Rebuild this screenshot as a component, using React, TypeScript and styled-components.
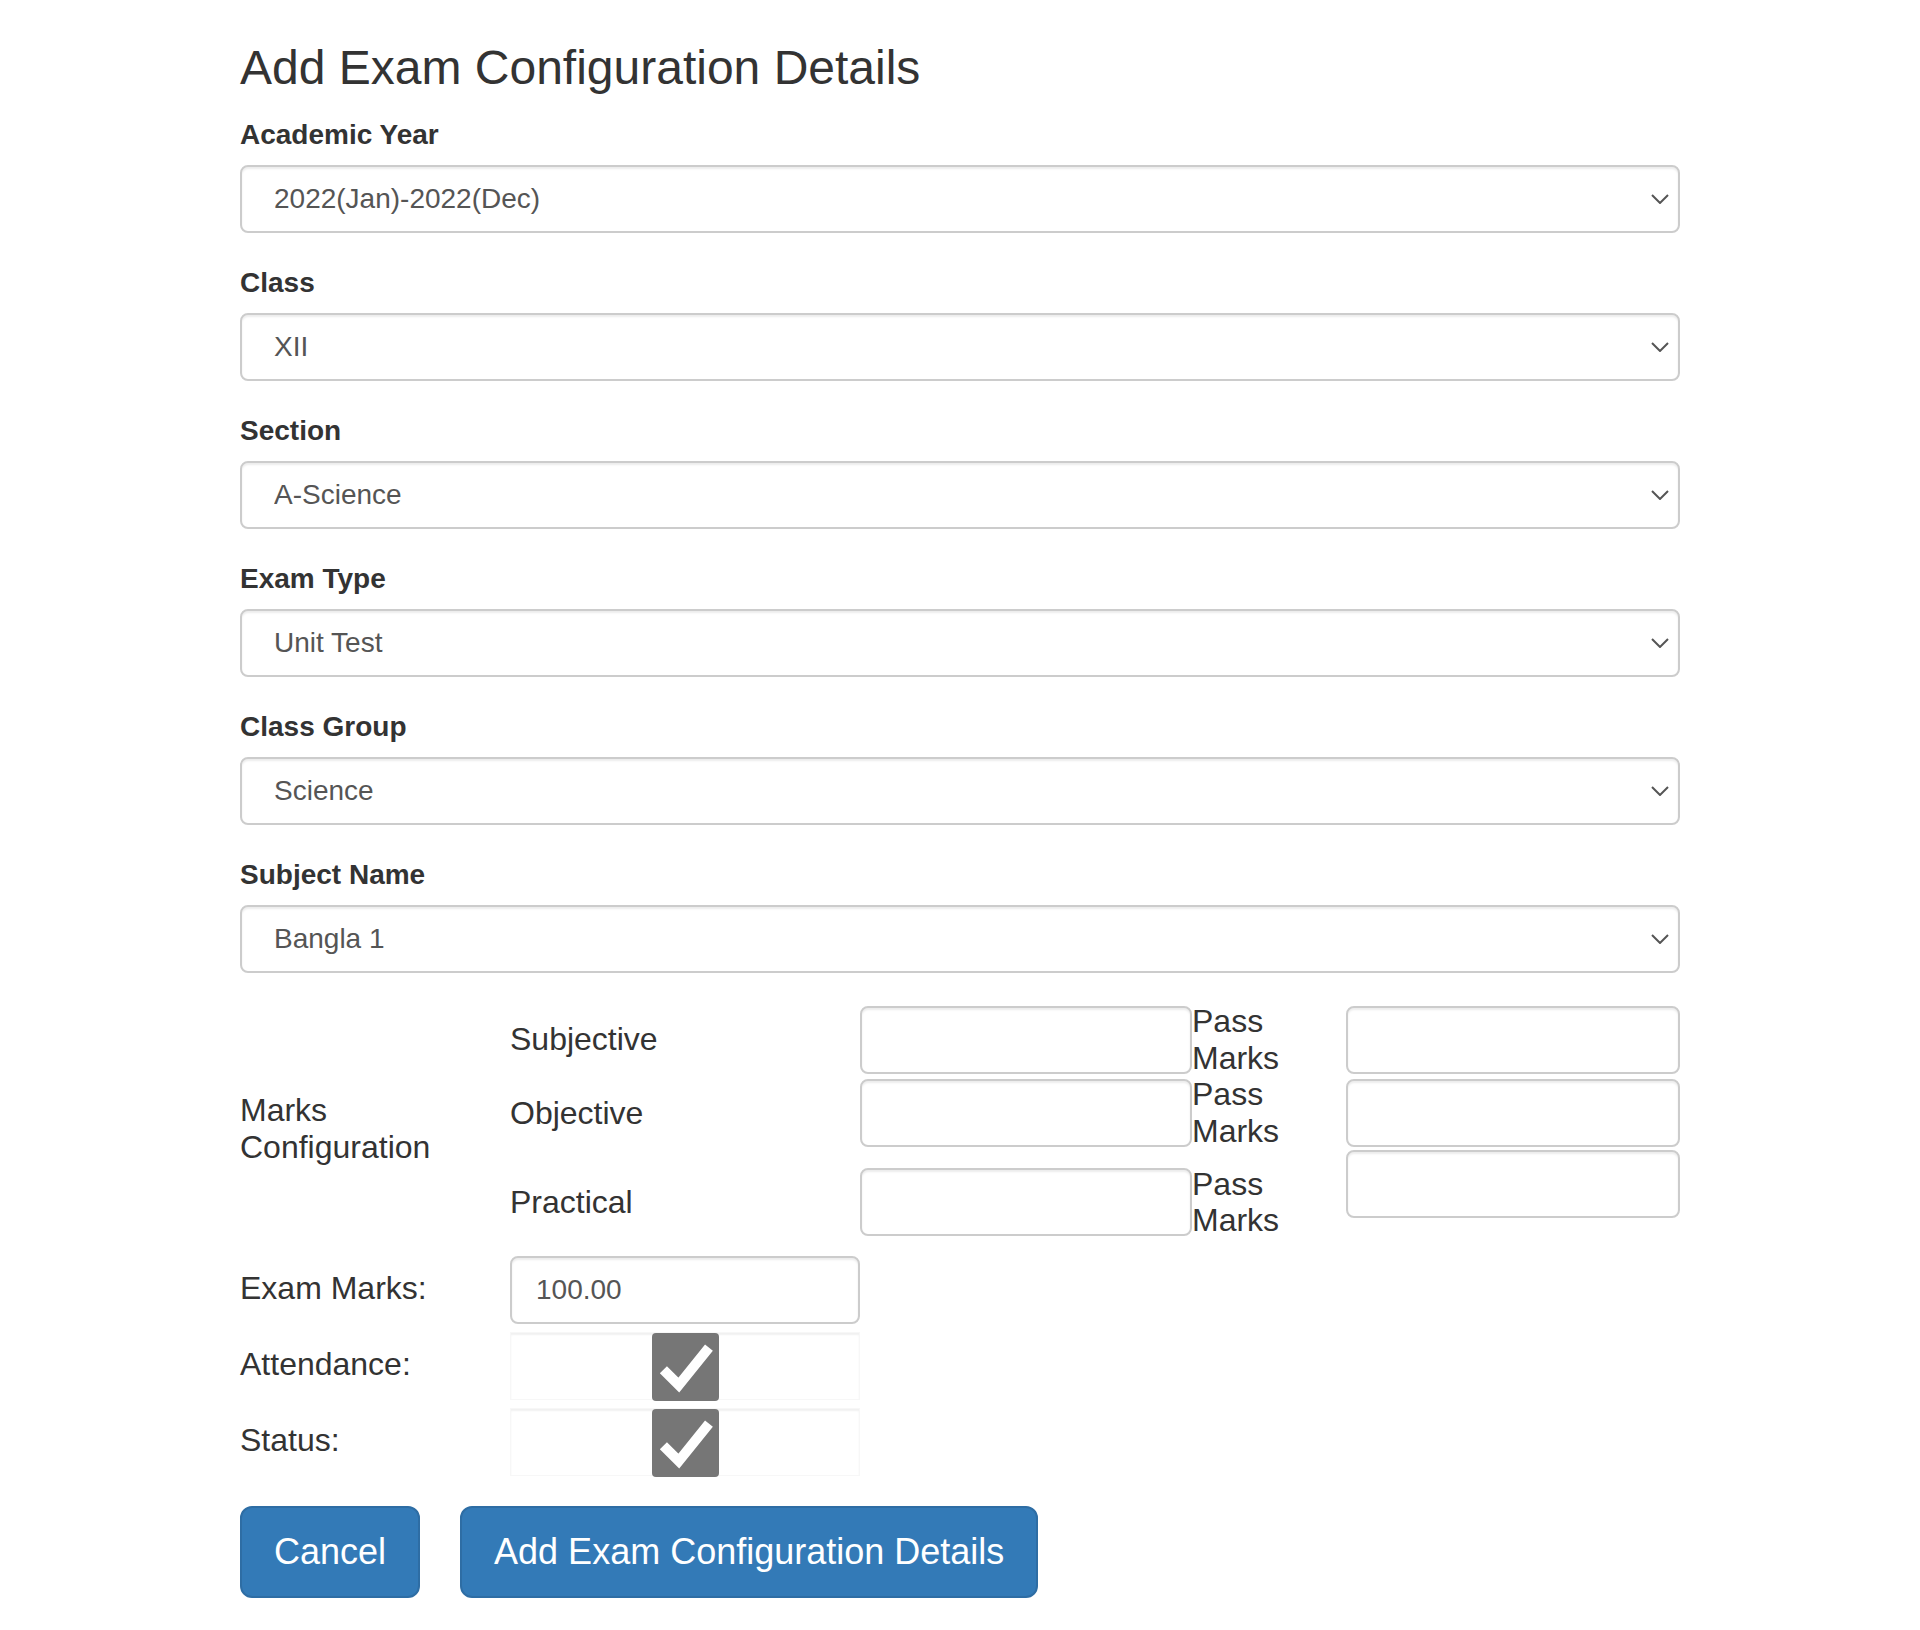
import React from 'react';
import styled, { createGlobalStyle } from 'styled-components';

const GlobalStyle = createGlobalStyle`
  html, body {
    margin: 0;
    padding: 0;
    background: #fff;
  }
  body {
    font-family: "Liberation Sans", Arial, Helvetica, sans-serif;
    color: #333;
  }
  * {
    box-sizing: border-box;
  }
`;

const Page = styled.div`
  width: 1440px;
  margin: 0 auto;
  padding-top: 2px;
  padding-bottom: 32px;
`;

const Title = styled.h3`
  margin: 40px 0 20px;
  font-size: 48px;
  font-weight: 500;
  line-height: 1.1;
  color: #333;
`;

const FormGroup = styled.div`
  margin-bottom: 30px;
`;

const Label = styled.label`
  display: inline-block;
  margin-bottom: 10px;
  font-size: 28px;
  font-weight: 700;
  line-height: 40px;
  color: #333;
`;

const SelectWrap = styled.div`
  position: relative;
`;

const Select = styled.select`
  display: block;
  width: 100%;
  height: 68px;
  padding: 0 60px 0 32px;
  font-family: inherit;
  font-size: 28px;
  color: #555;
  background: #fff;
  border: 2px solid #ccc;
  border-radius: 8px;
  box-shadow: inset 0 2px 2px rgba(0, 0, 0, 0.075);
  appearance: none;
  -webkit-appearance: none;
  outline: none;
`;

const Chevron = styled.svg`
  position: absolute;
  right: 11px;
  top: 50%;
  width: 18px;
  height: 10px;
  margin-top: -5px;
  pointer-events: none;
`;

const MarksGrid = styled.div`
  display: grid;
  grid-template-columns: 270px 350px 332px 154px 1fr;
  align-items: center;
  font-size: 32px;
  line-height: 1.15;
  color: #333;
`;

const GroupLabel = styled.div<{ $rows: number }>`
  grid-row: span ${(p) => p.$rows};
`;

const Cell = styled.div``;

const EmptyCell = styled.div<{ $span: number }>`
  grid-column: span ${(p) => p.$span};
`;

const TopCell = styled.div`
  align-self: start;
`;

const Spacer = styled.div`
  height: 1.15em;
`;

const TextInput = styled.input`
  display: block;
  width: 100%;
  height: 68px;
  padding: 0 24px;
  font-family: inherit;
  font-size: 28px;
  color: #555;
  background: #fff;
  border: 2px solid #ccc;
  border-radius: 8px;
  box-shadow: inset 0 2px 2px rgba(0, 0, 0, 0.075);
  outline: none;
`;

const RowLabel = styled.div`
  align-self: start;
  height: 68px;
  display: flex;
  align-items: center;
`;

const FieldCell = styled.div`
  align-self: start;
  padding: 1px 0 7px;
`;

const CheckField = styled.div`
  height: 68px;
  display: flex;
  justify-content: center;
  background: #fff;
  border: 1px solid #f7f7f7;
  box-shadow: inset 0 2px 2px rgba(0, 0, 0, 0.06);
`;

const CheckBox = styled.span`
  width: 67px;
  height: 68px;
  border-radius: 4px;
  background: #767676;
  display: flex;
  align-items: center;
  justify-content: center;
`;

const Actions = styled.div`
  display: flex;
  gap: 40px;
  margin-top: 23px;
`;

const Button = styled.button`
  height: 92px;
  padding: 0 32px;
  font-family: inherit;
  font-size: 36px;
  line-height: 48px;
  color: #fff;
  background: #337ab7;
  border: 2px solid #2e6da4;
  border-radius: 12px;
  cursor: pointer;
`;

const selects = [
  { label: 'Academic Year', value: '2022(Jan)-2022(Dec)' },
  { label: 'Class', value: 'XII' },
  { label: 'Section', value: 'A-Science' },
  { label: 'Exam Type', value: 'Unit Test' },
  { label: 'Class Group', value: 'Science' },
  { label: 'Subject Name', value: 'Bangla 1' },
];

const CheckMark = () => (
  <svg width="67" height="68" viewBox="0 0 100 100">
    <polyline
      points="17,54 40,77 85,21"
      fill="none"
      stroke="#fff"
      strokeWidth="15"
      strokeLinejoin="miter"
    />
  </svg>
);

const App = () => {
  return (
    <>
      <GlobalStyle />
      <Page>
        <Title>Add Exam Configuration Details</Title>
        {selects.map((item) => (
          <FormGroup key={item.label}>
            <Label>{item.label}</Label>
            <SelectWrap>
              <Select defaultValue={item.value}>
                <option value={item.value}>{item.value}</option>
              </Select>
              <Chevron viewBox="0 0 18 10">
                <polyline points="1,1 9,9 17,1" fill="none" stroke="#555" strokeWidth="2" />
              </Chevron>
            </SelectWrap>
          </FormGroup>
        ))}

        <MarksGrid>
          <GroupLabel $rows={3}>Marks<br />Configuration</GroupLabel>

          <Cell>Subjective</Cell>
          <Cell><TextInput /></Cell>
          <Cell>Pass Marks</Cell>
          <Cell><TextInput /></Cell>

          <Cell>Objective</Cell>
          <Cell><TextInput /></Cell>
          <Cell>Pass Marks</Cell>
          <Cell><TextInput /></Cell>

          <Cell>Practical</Cell>
          <Cell><TextInput /></Cell>
          <Cell>Pass Marks</Cell>
          <TopCell>
            <TextInput />
            <Spacer />
          </TopCell>

          <RowLabel>Exam Marks:</RowLabel>
          <FieldCell><TextInput defaultValue="100.00" /></FieldCell>
          <EmptyCell $span={3} />

          <RowLabel>Attendance:</RowLabel>
          <FieldCell>
            <CheckField>
              <CheckBox><CheckMark /></CheckBox>
            </CheckField>
          </FieldCell>
          <EmptyCell $span={3} />

          <RowLabel>Status:</RowLabel>
          <FieldCell>
            <CheckField>
              <CheckBox><CheckMark /></CheckBox>
            </CheckField>
          </FieldCell>
          <EmptyCell $span={3} />
        </MarksGrid>

        <Actions>
          <Button>Cancel</Button>
          <Button>Add Exam Configuration Details</Button>
        </Actions>
      </Page>
    </>
  );
};

export default App;
